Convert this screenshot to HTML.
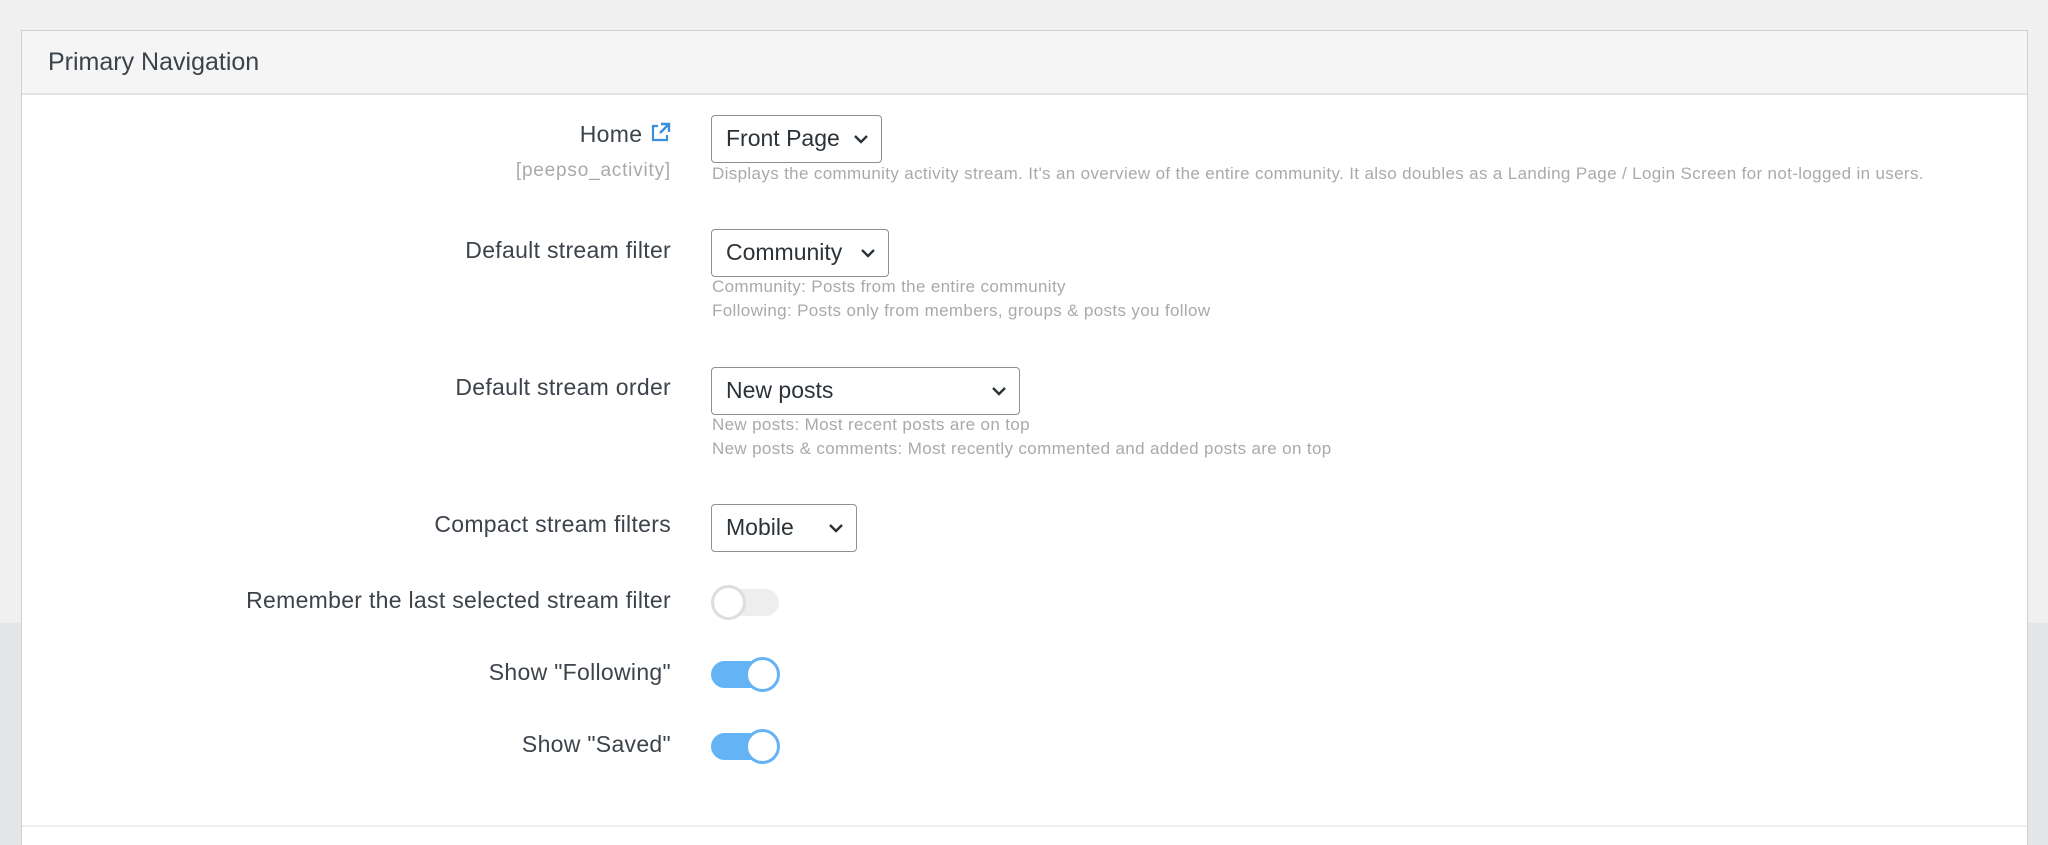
<!DOCTYPE html>
<html style="overflow:hidden;height:845px"><head><meta charset="utf-8"><style>
*{box-sizing:border-box;margin:0;padding:0}
body{width:2048px;height:845px;background:#f0f0f1;font-family:"Liberation Sans",sans-serif;position:relative;overflow:hidden}
.low{position:absolute;left:0;top:623px;width:2048px;height:222px;background:#e4e5e8}
.panel{position:absolute;left:21px;top:30px;width:2007px;height:815px;background:#fff;border:1px solid #d0d0d2;border-bottom:none}
.hdr{height:64px;background:#f5f5f5;border-bottom:2px solid #e2e2e4;font-size:25px;color:#3c434a;padding-left:26px;line-height:62px}
.lbl{position:absolute;right:1356px;font-size:23px;letter-spacing:0.3px;color:#3c434a;white-space:nowrap;text-align:right}
.sub{position:absolute;right:1356px;font-size:19px;letter-spacing:0.8px;color:#a7aaad;white-space:nowrap}
.sel{position:absolute;left:689px;height:48px;border:1.5px solid #8c8f94;border-radius:4px;font-size:23px;color:#2c3338;padding-left:14px;line-height:45px}
.sel svg{position:absolute;right:12px;top:17px}
.desc{position:absolute;left:690px;font-size:17px;color:#a7aaad;line-height:24px;white-space:nowrap;letter-spacing:0.35px}
.tg{position:absolute;left:689px;width:68px;height:27px;border-radius:14px}
.tg .k{position:absolute;top:-4px;width:35px;height:35px;border-radius:50%;background:#fff}
.off{background:#eee}.off .k{left:0;border:3px solid #ddd}
.on{background:#63b3f5}.on .k{left:34px;border:3px solid #63b3f5}
.bot{position:absolute;left:0;top:794px;width:100%;height:2px;background:#eeeef0}
</style></head><body>
<div class="low"></div>
<div class="panel">
<div class="hdr">Primary Navigation</div>
<div class="lbl" style="top:90px">Home <svg width="22" height="22" viewBox="0 0 22 22" style="vertical-align:-2px"><path d="M9 4H4v14h14v-5" fill="none" stroke="#3a8fde" stroke-width="2.2"/><path d="M12 2h8v8M20 2l-9 9" fill="none" stroke="#3a8fde" stroke-width="2.4"/></svg></div>
<div class="sub" style="top:129px">[peepso_activity]</div>
<div class="sel" style="top:84px;width:171px">Front Page<svg width="16" height="12" viewBox="0 0 16 12"><path d="M2 3l6 6 6-6" fill="none" stroke="#2c3338" stroke-width="2.4"/></svg></div>
<div class="desc" style="top:131px">Displays the community activity stream. It's an overview of the entire community. It also doubles as a Landing Page / Login Screen for not-logged in users.</div>

<div class="lbl" style="top:206px">Default stream filter</div>
<div class="sel" style="top:198px;width:178px">Community<svg width="16" height="12" viewBox="0 0 16 12"><path d="M2 3l6 6 6-6" fill="none" stroke="#2c3338" stroke-width="2.4"/></svg></div>
<div class="desc" style="top:244px">Community: Posts from the entire community<br>Following: Posts only from members, groups &amp; posts you follow</div>

<div class="lbl" style="top:343px">Default stream order</div>
<div class="sel" style="top:336px;width:309px">New posts<svg width="16" height="12" viewBox="0 0 16 12"><path d="M2 3l6 6 6-6" fill="none" stroke="#2c3338" stroke-width="2.4"/></svg></div>
<div class="desc" style="top:382px">New posts: Most recent posts are on top<br>New posts &amp; comments: Most recently commented and added posts are on top</div>

<div class="lbl" style="top:480px">Compact stream filters</div>
<div class="sel" style="top:473px;width:146px">Mobile<svg width="16" height="12" viewBox="0 0 16 12"><path d="M2 3l6 6 6-6" fill="none" stroke="#2c3338" stroke-width="2.4"/></svg></div>

<div class="lbl" style="top:556px">Remember the last selected stream filter</div>
<div class="tg off" style="top:558px"><div class="k"></div></div>

<div class="lbl" style="top:628px">Show "Following"</div>
<div class="tg on" style="top:630px"><div class="k"></div></div>

<div class="lbl" style="top:700px">Show "Saved"</div>
<div class="tg on" style="top:702px"><div class="k"></div></div>

<div class="bot"></div>
</div>
</body></html>
